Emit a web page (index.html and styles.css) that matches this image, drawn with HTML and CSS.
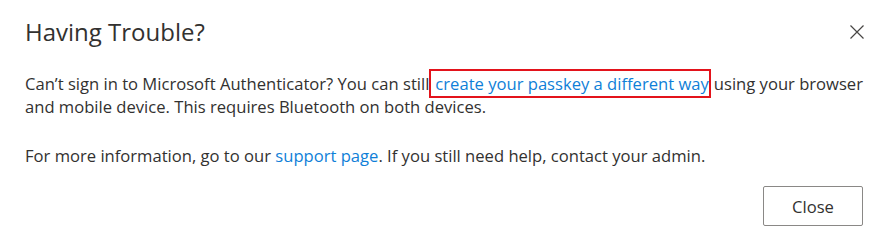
FILE: index.html
```html
<!DOCTYPE html>
<html lang="en">
<head>
<meta charset="utf-8">
<title>Having Trouble?</title>
<link rel="stylesheet" href="styles.css">
</head>
<body>
<div class="dialog">
  <div class="header">
    <h1 class="title">Having Trouble?</h1>
    <button class="close-x" aria-label="Close">
      <svg width="16" height="16" viewBox="0 0 16 16"><path d="M1.5 1.5 L14.5 14.5 M14.5 1.5 L1.5 14.5" stroke="#484644" stroke-width="1.2" fill="none"/></svg>
    </button>
  </div>
  <div class="content">
    <p class="para">Can’t sign in to Microsoft Authenticator? You can still<a class="link hl" href="#">create your passkey a different way</a>using your browser and mobile device. This requires Bluetooth on both devices.</p>
    <p class="para">For more information, go to our <a class="link" href="#">support page</a>. If you still need help, contact your admin.</p>
  </div>
  <div class="footer">
    <button class="btn">Close</button>
  </div>
</div>
</body>
</html>
```
FILE: styles.css
```css
html, body {
  margin: 0;
  padding: 0;
  background: #ffffff;
}
body {
  font-family: "Open Sans", "Noto Sans", "Liberation Sans", sans-serif;
  color: #323130;
}
.dialog {
  width: 889px;
  height: 251px;
  box-sizing: border-box;
  padding: 14px 25px 0 25px;
  display: flex;
  flex-direction: column;
}
.header {
  display: flex;
  justify-content: space-between;
  align-items: flex-start;
}
.title {
  margin: 0;
  font-size: 24px;
  font-weight: 400;
  line-height: 36px;
  color: #323130;
}
.close-x {
  border: none;
  background: none;
  padding: 0;
  margin: 10px -1px 0 0;
  width: 16px;
  height: 16px;
  cursor: pointer;
}
.close-x svg { display: block; }
.content {
  margin-top: 22px;
  margin-right: -10px;
}
.para {
  margin: 0 0 26px 0;
  font-size: 16.6px;
  line-height: 23px;
}
.link {
  color: #0f7fd8;
  text-decoration: none;
}
.hl {
  border: 2px solid #e3131b;
  padding: 1px 0 1px 4px;
  margin-right: 3px;
}
.footer {
  display: flex;
  justify-content: flex-end;
  margin-top: -7px;
}
.btn {
  width: 100px;
  height: 40px;
  margin-right: 1px;
  font-family: inherit;
  font-size: 16.6px;
  color: #323130;
  background: #ffffff;
  border: 1px solid #8a8886;
  border-radius: 2px;
}
```
